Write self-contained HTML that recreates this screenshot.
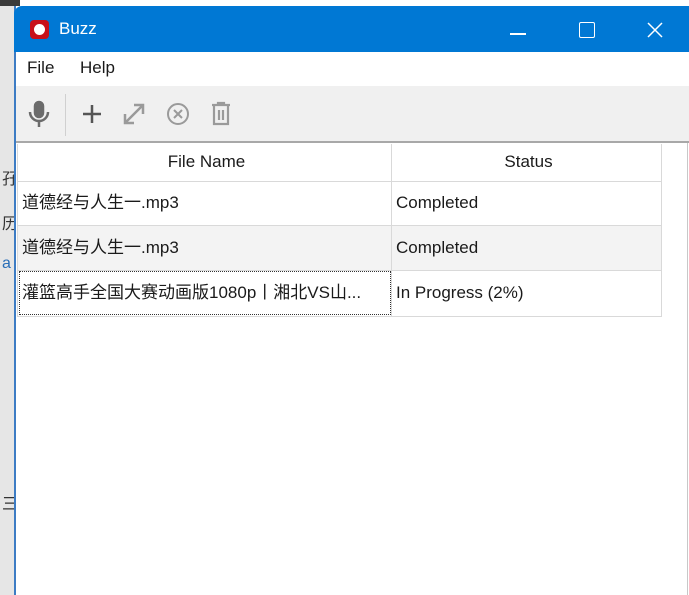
<!DOCTYPE html>
<html><head><meta charset="utf-8"><style>
*{margin:0;padding:0;box-sizing:border-box}
body{width:689px;height:595px;background:#fff;position:relative;overflow:hidden;font-family:"Segoe UI","Liberation Sans","Noto Sans CJK SC",sans-serif;color:#1a1a1a}
.abs{position:absolute}
.bg{left:0;top:0;width:14px;height:595px;background:#e6e6e6}
.top{left:0;top:0;width:689px;height:6px;background:#fff}
.win{left:14px;top:6px;width:675px;height:589px;border-left:2px solid #3d7cc4;background:#fff}
.title{left:14px;top:6px;width:675px;height:46px;background:#0078d4;color:#fff;font-size:17px;border-top-left-radius:8px}
.menu{left:16px;top:52px;width:673px;height:34px;background:#fff;font-size:17px}
.tool{left:16px;top:86px;width:673px;height:57px;background:#f0f0f0;border-bottom:2px solid #a8a8a8}
td{border:1px solid #d9d9d9;font-size:17px;line-height:20px;vertical-align:middle;padding:0 0 0 4px;white-space:nowrap;overflow:hidden}
td span{display:inline-block;line-height:20px;vertical-align:top}
</style></head><body>
<div class="abs bg"></div>
<div class="abs" style="left:0;top:0;width:20px;height:6px;background:#3a3a3a"></div>
<div class="abs" style="left:2px;top:165px;font-size:16px;color:#333">孖</div>
<div class="abs" style="left:2px;top:210px;font-size:16px;color:#333">历</div>
<div class="abs" style="left:2px;top:255px;font-size:16px;color:#2a6fb8">a</div>
<div class="abs" style="left:2px;top:490px;font-size:16px;color:#333">三</div>
<div class="abs top" style="left:20px"></div>
<div class="abs win"></div>
<div class="abs title">
 <div class="abs" style="left:16px;top:14px;width:19px;height:19px;background:#c8101a;border-radius:4px"><div class="abs" style="left:4px;top:4px;width:11px;height:11px;background:#fff;border-radius:50%"></div></div>
 <div class="abs" style="left:45px;top:13px">Buzz</div>
 <div class="abs" style="left:496px;top:27px;width:16px;height:1.5px;background:#fff"></div>
 <div class="abs" style="left:565px;top:16px;width:16px;height:16px;border:1.5px solid #fff;border-radius:2px"></div>
 <svg class="abs" style="left:632px;top:15px" width="18" height="18"><path d="M2 2L16 16M16 2L2 16" stroke="#fff" stroke-width="1.5"/></svg>
</div>
<div class="abs menu"><span class="abs" style="left:11px;top:6px">File</span><span class="abs" style="left:64px;top:6px">Help</span></div>
<div class="abs tool">
 <svg class="abs" style="left:10px;top:14px" width="26" height="28" fill="none" stroke="#6b6b6b" stroke-width="2.5"><rect x="9" y="2" width="8" height="15" rx="4" fill="#6b6b6b"/><path d="M4 12a9 9 0 0 0 18 0M13 21v6" /></svg>
 <div class="abs" style="left:49px;top:8px;width:1px;height:42px;background:#d0d0d0"></div>
 <svg class="abs" style="left:65px;top:17px" width="22" height="22" stroke="#555" stroke-width="2.5"><path d="M11 2v18M2 11h18"/></svg>
 <svg class="abs" style="left:106px;top:16px" width="24" height="24" stroke="#9a9a9a" stroke-width="2.5" fill="none"><path d="M3 21L21 3M12 3h9v9M3 12v9h9"/></svg>
 <svg class="abs" style="left:150px;top:16px" width="24" height="24" stroke="#9a9a9a" stroke-width="2" fill="none"><circle cx="12" cy="12" r="10"/><path d="M8 8l8 8M16 8l-8 8"/></svg>
 <svg class="abs" style="left:194px;top:15px" width="22" height="26" stroke="#9a9a9a" stroke-width="2.2" fill="none"><path d="M2 4h18M8 4V2h6v2M4 5v18h14V5M9 9v10M13 9v10"/></svg>
</div>
<div class="abs" style="left:687px;top:143px;width:1px;height:452px;background:#c8c8c8"></div>
<table class="abs" style="left:17px;top:144px;border-collapse:collapse;width:644px;table-layout:fixed">
<col style="width:374px"><col style="width:270px">
<tr style="height:37px;background:#fff"><td style="text-align:center;border-top:none"><span>File Name</span></td><td style="text-align:center;border-top:none"><span>Status</span></td></tr>
<tr style="height:44px;background:#fff"><td><span>道德经与人生一.mp3</span></td><td><span>Completed</span></td></tr>
<tr style="height:45px;background:#f3f3f3"><td><span>道德经与人生一.mp3</span></td><td><span>Completed</span></td></tr>
<tr style="height:46px;background:#fff"><td style="outline:1px dotted #333;outline-offset:-2px"><span>灌篮高手全国大赛动画版1080p丨湘北VS山...</span></td><td><span>In Progress (2%)</span></td></tr>
</table>
</body></html>
